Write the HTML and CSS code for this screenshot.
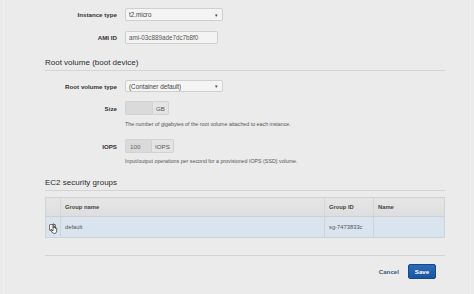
FILE: index.html
```html
<!DOCTYPE html>
<html>
<head>
<meta charset="utf-8">
<link rel="stylesheet" href="styles.css">
</head>
<body>
<div class="page">
  <div class="row r-instance">
    <div class="label">Instance type</div>
    <div class="select w97"><span>t2.micro</span><span class="arrow">▾</span></div>
  </div>
  <div class="row r-ami">
    <div class="label">AMI ID</div>
    <div class="input w92">ami-03c889ade7dc7b8f0</div>
  </div>

  <div class="heading h-root">Root volume (boot device)</div>

  <div class="row r-rvt">
    <div class="label">Root volume type</div>
    <div class="select w97 short"><span>(Container default)</span><span class="arrow">▾</span></div>
  </div>
  <div class="row r-size">
    <div class="label">Size</div>
    <div class="group">
      <div class="ginput g27"></div>
      <div class="addon">GB</div>
    </div>
  </div>
  <div class="help h1">The number of gigabytes of the root volume attached to each instance.</div>
  <div class="row r-iops">
    <div class="label">IOPS</div>
    <div class="group">
      <div class="ginput g26">100</div>
      <div class="addon">IOPS</div>
    </div>
  </div>
  <div class="help h2">Input/output operations per second for a provisioned IOPS (SSD) volume.</div>

  <div class="heading h-ec2">EC2 security groups</div>

  <div class="table">
    <div class="tr thead">
      <div class="td c-check"></div>
      <div class="td c-name">Group name</div>
      <div class="td c-id">Group ID</div>
      <div class="td c-nm">Name</div>
    </div>
    <div class="tr trow">
      <div class="td c-check"><span class="cb"></span>
        <svg class="hand" width="9" height="11" viewBox="0 0 9 11"><path d="M3 1.2c0-.6.9-.6.9 0V5l.1-.9c0-.6.9-.6.9 0v1c0-.6.9-.6.9 0v.5c0-.6.9-.6.9 0V8c0 1.4-1 2.4-2.3 2.4H4c-1 0-1.6-.6-2.1-1.4L.8 7c-.3-.6.4-1 .8-.5L3 8V1.2z" fill="#fff" stroke="#222" stroke-width=".7"/></svg>
      </div>
      <div class="td c-name">default</div>
      <div class="td c-id">sg-7473833c</div>
      <div class="td c-nm"></div>
    </div>
  </div>

  <div class="divider"></div>

  <div class="footer">
    <span class="cancel">Cancel</span>
    <span class="save">Save</span>
  </div>
</div>
</body>
</html>
```

FILE: styles.css
```css
html, body {
  margin: 0;
  padding: 0;
}
body {
  background: #ebebeb;
  font-family: "Liberation Sans", Arial, sans-serif;
  color: #333;
  width: 474px;
  height: 294px;
  overflow: hidden;
}
.page {
  box-sizing: border-box;
  height: 294px;
  margin: 0 3px;
  padding: 8px 25px 0 41px;
  border-left: 1px solid #f1f1f1;
  border-right: 1px solid #f1f1f1;
}
.row {
  display: flex;
  align-items: center;
}
.label {
  width: 72px;
  margin-right: 8px;
  text-align: right;
  font-weight: bold;
  font-size: 6.2px;
  color: #333;
}
.r-instance { height: 13px; }
.r-ami { height: 13px; margin-top: 10px; }
.r-rvt { height: 12px; margin-top: 9px; }
.r-size { height: 14px; margin-top: 9px; }
.r-iops { height: 14px; margin-top: 11px; }

.select, .input {
  box-sizing: border-box;
  height: 100%;
  border: 1px solid #cfcfcf;
  border-radius: 2px;
  background: #f3f3f3;
  font-size: 6.3px;
  color: #444;
  display: flex;
  align-items: center;
  padding: 0 3px;
}
.select { justify-content: space-between; background: #f4f4f4; }
.w97 { width: 98px; }
.w92 { width: 93px; color: #555; }
.arrow { font-size: 5px; color: #444; margin-right: 1px; }

.group { display: flex; height: 100%; }
.ginput {
  box-sizing: border-box;
  height: 100%;
  background: #dadada;
  border: 1px solid #d2d2d2;
  border-right: none;
  border-radius: 2px 0 0 2px;
  font-size: 6.2px;
  color: #666;
  display: flex;
  align-items: center;
  padding-left: 4px;
}
.g27 { width: 27px; }
.g26 { width: 26px; }
.addon {
  box-sizing: border-box;
  height: 100%;
  background: #e4e4e4;
  border: 1px solid #d2d2d2;
  border-radius: 0 2px 2px 0;
  font-size: 6.2px;
  color: #555;
  display: flex;
  align-items: center;
  padding: 0 3px;
}

.help {
  margin-left: 80px;
  font-size: 5.3px;
  line-height: 8px;
  color: #555;
}
.h1 { margin-top: 5px; }
.h2 { margin-top: 4px; }

.heading {
  font-size: 8px;
  line-height: 10px;
  color: #2b2b2b;
  padding-bottom: 2px;
  border-bottom: 1px solid #d4d4d4;
  margin-left: 0;
}
.h-root { margin-top: 14px; }
.h-ec2 { margin-top: 13px; }

.table {
  margin-top: 6px;
  border: 1px solid #cdd3d8;
}
.tr { display: flex; }
.thead {
  height: 18px;
  background: linear-gradient(#e6e6e6, #dedede);
  border-bottom: 1px solid #cfcfcf;
  font-weight: bold;
}
.trow {
  height: 20px;
  background: #d9e4ee;
}
.td {
  box-sizing: border-box;
  display: flex;
  align-items: center;
  font-size: 5.8px;
  color: #444;
  padding-left: 4px;
  border-right: 1px solid #cdd4da;
}
.thead .td { border-right-color: #d6d6d6; }
.td:last-child { border-right: none; }
.c-check { width: 15px; position: relative; padding-left: 3px; }
.c-name { width: 264px; }
.c-id { width: 49px; }
.c-nm { flex: 1; }
.trow .td { color: #555; }

.cb {
  width: 5px;
  height: 5px;
  border: 1px solid #777;
  background: #f3f3f3;
  border-radius: 1px;
}
.hand {
  position: absolute;
  left: 4px;
  top: 6px;
}

.divider {
  margin-top: 17px;
  border-top: 1px solid #d4d4d4;
}
.footer {
  margin-top: 8px;
  display: flex;
  justify-content: flex-end;
  align-items: center;
  padding-right: 9px;
}
.cancel {
  font-size: 6.2px;
  font-weight: bold;
  color: #3b5a80;
  margin-right: 9px;
}
.save {
  box-sizing: border-box;
  width: 28px;
  height: 15px;
  border-radius: 2px;
  background: linear-gradient(#2d6bb7, #1b55a0);
  border: 1px solid #174886;
  color: #fff;
  font-size: 6.2px;
  font-weight: bold;
  display: flex;
  align-items: center;
  justify-content: center;
}
```
